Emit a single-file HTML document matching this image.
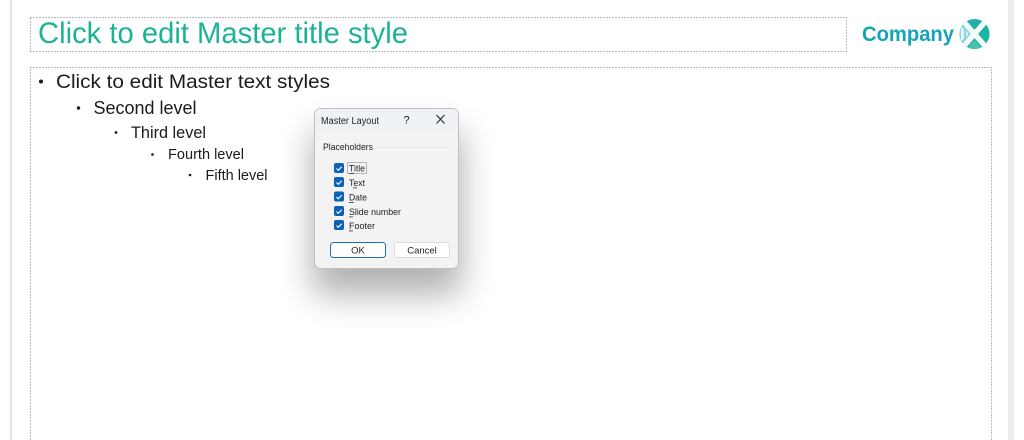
<!DOCTYPE html>
<html>
<head>
<meta charset="utf-8">
<style>
html,body{margin:0;padding:0;background:#fff;width:1024px;height:440px;overflow:hidden}
svg{display:block}
text{font-family:"Liberation Sans",sans-serif}
</style>
</head>
<body>
<svg width="1024" height="440" viewBox="0 0 1024 440" xmlns="http://www.w3.org/2000/svg">
<defs>
<filter id="sh" x="-80%" y="-80%" width="260%" height="260%"><feGaussianBlur stdDeviation="17"/></filter>
<filter id="soft" x="0" y="0" width="100%" height="100%" filterUnits="userSpaceOnUse"><feGaussianBlur stdDeviation="0.35"/></filter>
<clipPath id="logo"><circle cx="974.5" cy="34" r="15"/></clipPath>
<linearGradient id="lg" x1="0" y1="0" x2="1" y2="0"><stop offset="0" stop-color="#28aab8"/><stop offset="1" stop-color="#17b79c"/></linearGradient>
</defs>
<rect width="1024" height="440" fill="#fff"/>
<g filter="url(#soft)">
<rect x="10" y="0" width="2" height="440" fill="#e4e4e4"/>
<rect x="1008" y="0" width="6" height="440" fill="#ececec"/>

<rect x="30.500" y="17.500" width="816" height="34" fill="none" stroke="#777" stroke-width="1" stroke-dasharray="1 2"/>
<rect x="30.500" y="67.500" width="961" height="380" fill="none" stroke="#777" stroke-width="1" stroke-dasharray="1 2"/>

<text x="38" y="43" font-size="29.500" fill="#1fb394" textLength="370" lengthAdjust="spacingAndGlyphs">Click to edit Master title style</text>

<text x="862" y="41" font-size="21" font-weight="bold" fill="#16a3b8" textLength="92" lengthAdjust="spacingAndGlyphs">Company</text>
<g clip-path="url(#logo)">
<rect x="959" y="19" width="31" height="30" fill="url(#lg)"/>
<path d="M958 22L974.500 34L958 46Z" fill="#8fd4df"/>
<path d="M961 27L964 29.500L964 38.500L961 41Z" fill="#e4f5f7"/>
<path d="M966 31L968 33L968 35L966 37Z" fill="#d6f0f3"/>
<path d="M966 50L974.500 40L983 50Z" fill="#4cc2b0"/>
<path d="M964 22L985 46" stroke="#f2fafa" stroke-width="5.500" fill="none"/>
<path d="M985 22L964 46" stroke="#f7fcfb" stroke-width="5.500" fill="none"/>
</g>

<g fill="#1a1a1a">
<circle cx="41" cy="81.500" r="2"/>
<text x="56" y="88" font-size="19.500" textLength="274" lengthAdjust="spacingAndGlyphs">Click to edit Master text styles</text>
<circle cx="78.500" cy="108" r="1.700"/>
<text x="93.500" y="114" font-size="18.500" textLength="103" lengthAdjust="spacingAndGlyphs">Second level</text>
<circle cx="116" cy="132.500" r="1.400"/>
<text x="131" y="138" font-size="17" textLength="75" lengthAdjust="spacingAndGlyphs">Third level</text>
<circle cx="152.500" cy="154.500" r="1.300"/>
<text x="168" y="159" font-size="14.500" textLength="76" lengthAdjust="spacingAndGlyphs">Fourth level</text>
<circle cx="190" cy="175" r="1.300"/>
<text x="205.500" y="180" font-size="14.500" textLength="62" lengthAdjust="spacingAndGlyphs">Fifth level</text>
</g>

<!-- dialog -->
<rect x="312" y="130" width="150" height="165" rx="12" fill="#000" opacity="0.30" filter="url(#sh)"/>
<rect x="314.500" y="108.500" width="144" height="160" rx="6" fill="#f3f3f3" stroke="#c0c0c0"/>
<path d="M315 130H458V114a5 5 0 0 0-5-5H320a5 5 0 0 0-5 5Z" fill="#eef2f6"/>
<text x="321" y="124" font-size="10" fill="#222" textLength="58" lengthAdjust="spacingAndGlyphs">Master Layout</text>
<text x="403.500" y="123.500" font-size="11" fill="#222">?</text>
<path d="M436.500 115L444.500 123.500M444.500 115L436.500 123.500" stroke="#222" stroke-width="1" fill="none"/>

<text x="323" y="150" font-size="9" fill="#222" textLength="50" lengthAdjust="spacingAndGlyphs">Placeholders</text>
<rect x="376" y="147" width="75" height="1" fill="#e6e6e6"/>

<g fill="#0f62b8">
<rect x="334" y="163" width="10" height="10" rx="2"/>
<rect x="334" y="177" width="10" height="10" rx="2"/>
<rect x="334" y="191.500" width="10" height="10" rx="2"/>
<rect x="334" y="206" width="10" height="10" rx="2"/>
<rect x="334" y="220" width="10" height="10" rx="2"/>
</g>
<g fill="none" stroke="#fff" stroke-width="1.100">
<path d="M336.500 168.500l1.800 1.800 3.400-3.600"/>
<path d="M336.500 182.500l1.800 1.800 3.400-3.600"/>
<path d="M336.500 197l1.800 1.800 3.400-3.600"/>
<path d="M336.500 211.500l1.800 1.800 3.400-3.600"/>
<path d="M336.500 225.500l1.800 1.800 3.400-3.600"/>
</g>
<rect x="347.500" y="162.500" width="19" height="11" fill="none" stroke="#555" stroke-width="0.800" stroke-dasharray="1 1"/>
<g font-size="9.500" fill="#222">
<text x="349" y="171.500" textLength="16" lengthAdjust="spacingAndGlyphs">Title</text>
<text x="349" y="186" textLength="16" lengthAdjust="spacingAndGlyphs">Text</text>
<text x="349" y="200.500" textLength="18" lengthAdjust="spacingAndGlyphs">Date</text>
<text x="349" y="215" textLength="52" lengthAdjust="spacingAndGlyphs">Slide number</text>
<text x="349" y="229" textLength="26" lengthAdjust="spacingAndGlyphs">Footer</text>
</g>
<g fill="#333">
<rect x="349" y="173" width="5" height="0.800"/>
<rect x="353" y="187.500" width="4" height="0.800"/>
<rect x="349" y="202" width="5" height="0.800"/>
<rect x="349" y="216.500" width="4" height="0.800"/>
<rect x="349" y="230.500" width="4" height="0.800"/>
</g>

<rect x="330.500" y="242.500" width="55" height="15" rx="3" fill="#fff" stroke="#1a6fb5" stroke-width="1"/>
<text x="358" y="253.500" font-size="9.500" fill="#222" text-anchor="middle">OK</text>
<rect x="394.500" y="242.500" width="55" height="15" rx="3" fill="#fff" stroke="#dcdcdc" stroke-width="1"/>
<text x="422" y="253.500" font-size="9.500" fill="#222" text-anchor="middle">Cancel</text>
</g>
</svg>
</body>
</html>
